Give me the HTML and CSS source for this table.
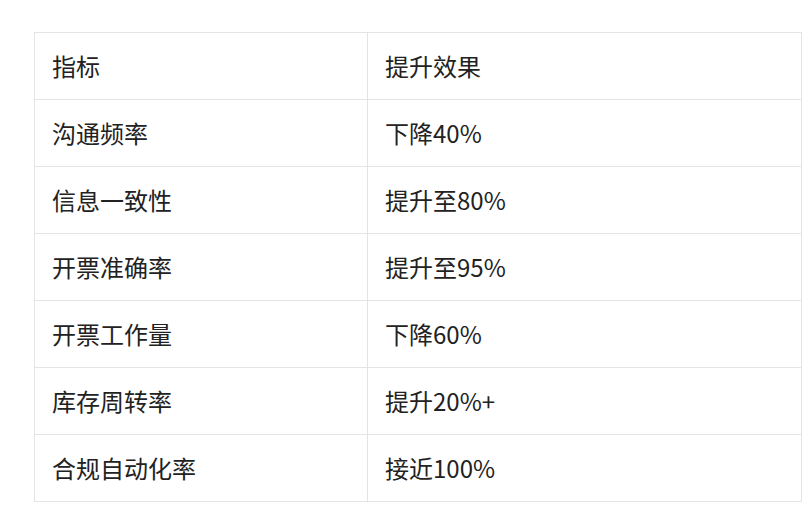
FILE: index.html
```html
<!DOCTYPE html>
<html lang="zh">
<head>
<meta charset="utf-8">
<link rel="stylesheet" href="styles.css">
</head>
<body>
<table class="data">
  <tr><td>指标</td><td>提升效果</td></tr>
  <tr><td>沟通频率</td><td>下降40%</td></tr>
  <tr><td>信息一致性</td><td>提升至80%</td></tr>
  <tr><td>开票准确率</td><td>提升至95%</td></tr>
  <tr><td>开票工作量</td><td>下降60%</td></tr>
  <tr><td>库存周转率</td><td>提升20%+</td></tr>
  <tr><td>合规自动化率</td><td>接近100%</td></tr>
</table>
</body>
</html>
```
FILE: styles.css
```css
html, body {
  margin: 0;
  background: #fff;
}
body {
  padding: 32px 0 0 34px;
  font-family: "Noto Sans CJK SC", "Noto Sans", sans-serif;
  color: #222;
}
.data {
  border-collapse: collapse;
  width: 768px;
  table-layout: fixed;
}
.data td {
  border: 1px solid #e4e4e4;
  height: 67px;
  box-sizing: border-box;
  padding: 0 17px;
  font-size: 24px;
  line-height: 30px;
  vertical-align: middle;
}
.data td:first-child {
  width: 333px;
}
```
